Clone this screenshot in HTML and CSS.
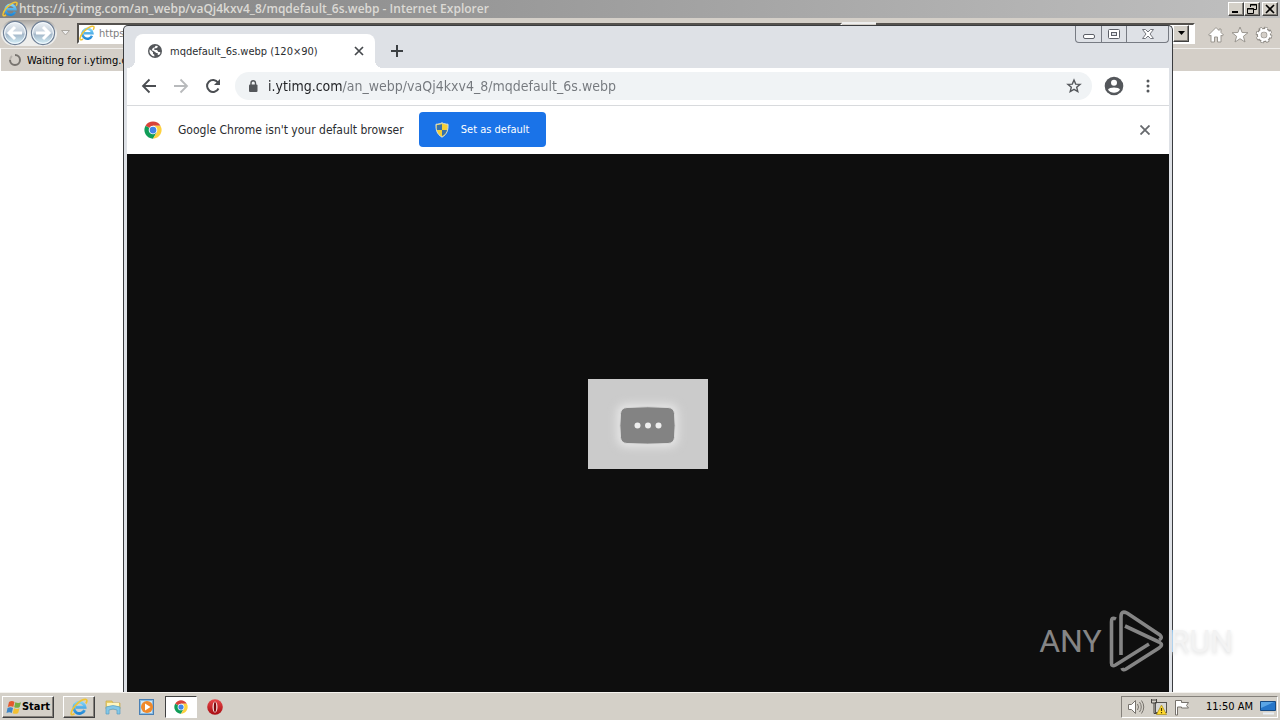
FILE: index.html
```html
<!DOCTYPE html>
<html lang="en">
<head>
<meta charset="utf-8">
<meta name="viewport" content="width=device-width, initial-scale=1">
<title>mqdefault_6s.webp (120×90)</title>
<link rel="stylesheet" href="styles.css">
</head>
<body>
<svg class="defs" aria-hidden="true">
  <defs>
    <linearGradient id="ie-blue" x1="0" y1="0" x2="0" y2="1"><stop offset="0" stop-color="#7fd3f8"/><stop offset="1" stop-color="#2188d6"/></linearGradient>
    <linearGradient id="orb" x1="0" y1="0" x2="0" y2="1"><stop offset="0" stop-color="#eef2f6"/><stop offset=".5" stop-color="#c3cfdb"/><stop offset=".55" stop-color="#a3b6c8"/><stop offset="1" stop-color="#d8f3fb"/></linearGradient>
    <linearGradient id="red-orb" x1="0" y1="0" x2="0" y2="1"><stop offset="0" stop-color="#e8484a"/><stop offset="1" stop-color="#a80c12"/></linearGradient>
    <symbol id="ie" viewBox="0 0 16 16">
      <path d="M13 10.800a5 5 0 1 1 .4-2.600H5" fill="none" stroke="url(#ie-blue)" stroke-width="2.500"/>
      <path d="M4 13.800C1.800 15.600.5 15 1.200 12.600 2 9.400 6 4.500 10 2.300 12.800.8 15.200.7 15 2.600c-.1 1-.5 1.700-.9 2.300" fill="none" stroke="#f0c436" stroke-width="1.500"/>
    </symbol>
    <symbol id="chrome" viewBox="0 0 48 48">
      <circle cx="24" cy="24" r="23" fill="#fff"/>
      <path d="M24 24 4.100 12.500A23 23 0 0 1 43.900 12.500H24z" fill="#d9433a"/>
      <path d="M24 24 4.100 12.500A23 23 0 0 0 24 47l10-17.300z" fill="#109d58"/>
      <path d="M24 12.500H43.900A23 23 0 0 1 24 47L34 29.700z" fill="#fdd13f"/>
      <circle cx="24" cy="24" r="11.500" fill="#fff"/><circle cx="24" cy="24" r="9" fill="#4285e8"/>
    </symbol>
  </defs>
</svg>
<div class="desktop">
  <section class="ie" aria-label="Internet Explorer">
    <header class="ie-title">
      <svg class="i16" aria-hidden="true"><use href="#ie"/></svg>
      <span class="ie-caption">https://i.ytimg.com/an_webp/vaQj4kxv4_8/mqdefault_6s.webp - Internet Explorer</span>
      <div class="ie-controls">
        <button class="raised" aria-label="Minimize"><svg viewBox="0 0 12 10"><path d="M2 8h6" stroke="#000" stroke-width="2"/></svg></button>
        <button class="raised" aria-label="Restore"><svg viewBox="0 0 12 10"><path d="M4.500 3V.5h6v5H8M4 1h7M1.500 4.500h6v5h-6zM1 5h7" fill="none" stroke="#000"/></svg></button>
        <button class="raised close" aria-label="Close"><svg viewBox="0 0 12 10"><path d="m2 1 8 8m0-8-8 8" stroke="#000" stroke-width="1.600"/></svg></button>
      </div>
    </header>
    <div class="ie-bar">
      <div class="ie-nav">
        <button aria-label="Back"><svg viewBox="0 0 26 26"><circle cx="13" cy="13" r="11.500" fill="url(#orb)" stroke="#718197" stroke-width="1.300"/><circle cx="13" cy="13" r="10.400" fill="none" stroke="#f6fbff"/><path d="M20 13H8m5-6-6 6 6 6" fill="none" stroke="#fff" stroke-width="3"/></svg></button>
        <button aria-label="Forward"><svg viewBox="0 0 26 26"><circle cx="13" cy="13" r="11.500" fill="url(#orb)" stroke="#718197" stroke-width="1.300"/><circle cx="13" cy="13" r="10.400" fill="none" stroke="#f6fbff"/><path d="M6 13h12m-5-6 6 6-6 6" fill="none" stroke="#fff" stroke-width="3"/></svg></button>
      </div>
      <button class="recent" aria-label="Recent pages"><svg viewBox="0 0 9 6"><path d="M.5.5h8l-4 4.500z" fill="#eee" stroke="#aaa69f"/></svg></button>
      <div class="sunken address">
        <svg class="i16" aria-hidden="true"><use href="#ie"/></svg>
        <input aria-label="Address" value="https://i.ytimg.com/an_webp/vaQj4kxv4_8/mqdefault_6s.webp">
      </div>
      <div class="ie-tab"></div>
      <div class="sunken search">
        <input aria-label="Search">
        <button class="raised drop" aria-label="Search options"><svg viewBox="0 0 9 5"><path d="M1 0h7L4.500 4z"/></svg></button>
      </div>
      <div class="ie-tools">
        <button aria-label="Home"><svg viewBox="0 0 18 18"><path d="M9 1.500 1.500 9 3 10l1-.8V16h3.500v-5h3v5H14V9.200l1 .8 1.500-1L14 6.500V3h-2v1.500z" fill="#fff" stroke="#9a968f"/></svg></button>
        <button aria-label="Favorites"><svg viewBox="0 0 18 18"><path d="m9 1 2.100 5.500 5.900.2-4.600 3.600L14 16l-5-3.300L4 16l1.600-5.700L1 6.700l5.900-.2z" fill="#fff" stroke="#9a968f"/></svg></button>
        <button aria-label="Tools"><svg viewBox="0 0 18 18"><circle cx="9" cy="9" r="6.800" fill="none" stroke="#8d8983" stroke-width="3" stroke-dasharray="3.200 2.140"/><circle cx="9" cy="9" r="5" fill="none" stroke="#8d8983" stroke-width="4.600"/><circle cx="9" cy="9" r="6.300" fill="none" stroke="#fff" stroke-width="2.400" stroke-dasharray="2 2.950" stroke-dashoffset="-.4"/><circle cx="9" cy="9" r="4.700" fill="none" stroke="#fff" stroke-width="2.800"/></svg></button>
      </div>
    </div>
    <div class="ie-status">
      <svg viewBox="0 0 14 14" aria-hidden="true"><path d="M7 2a5 5 0 1 1-5 5" fill="none" stroke="#77736e" stroke-width="2"/><path d="M2 7a5 5 0 0 1 2-4" fill="none" stroke="#b5b0aa" stroke-width="2"/></svg>
      <span>Waiting for i.ytimg.com</span>
    </div>
    <div class="ie-page"></div>
  </section>

  <section class="chrome" aria-label="Google Chrome">
    <header class="strip">
      <div class="tab">
        <svg class="i16" viewBox="0 0 24 24" aria-hidden="true"><circle cx="12" cy="12" r="10.500" fill="#54575b"/><path d="M4 9.500 9 14v2l2 1.500v2.700A8.500 8.500 0 0 1 4 9.500zM13 4l3 .5v2L14 8h-3v2.500h4l2 3h2l1.300 1A8.500 8.500 0 0 1 18 18l-2-.5V15h-2l-4-3-3-1 2-4h2z" fill="#fff"/></svg>
        <span class="tab-name">mqdefault_6s.webp (120×90)</span>
        <button class="tab-close" aria-label="Close tab"><svg viewBox="0 0 10 10"><path d="m1 1 8 8m0-8-8 8" stroke="#45484c" stroke-width="1.700"/></svg></button>
      </div>
      <button class="new-tab" aria-label="New tab"><svg viewBox="0 0 12 12"><path d="M6 0v12M0 6h12" stroke="#3c4043" stroke-width="2"/></svg></button>
      <div class="win-controls">
        <button aria-label="Minimize"><svg viewBox="0 0 14 12"><rect x="1.500" y="6.500" width="11" height="4" rx="1.500" fill="#fff" stroke="#5d6068"/></svg></button>
        <button aria-label="Maximize"><svg viewBox="0 0 14 12"><rect x="1.500" y="1.500" width="11" height="9" rx="1" fill="#fff" stroke="#5d6068"/><rect x="4.500" y="4.500" width="5" height="3" fill="#dee1e6" stroke="#5d6068"/></svg></button>
        <button class="wide" aria-label="Close"><svg viewBox="0 0 14 12"><path d="M1.500 1.500h3L7 4l2.500-2.500h3L9 6l3.500 4.500h-3L7 8l-2.500 2.500h-3L5 6z" fill="#fff" stroke="#74777e"/></svg></button>
      </div>
    </header>
    <div class="toolbar">
      <button aria-label="Back"><svg viewBox="0 0 16 16"><path d="M15 8H2m6.500-6.500L2 8l6.500 6.500" fill="none" stroke="#4b4e52" stroke-width="1.800"/></svg></button>
      <button aria-label="Forward"><svg viewBox="0 0 16 16"><path d="M1 8h13M7.500 1.500 14 8l-6.500 6.500" fill="none" stroke="#b8babc" stroke-width="1.800"/></svg></button>
      <button aria-label="Reload"><svg viewBox="0 0 16 16"><path d="M13.500 10.500A6 6 0 1 1 13 4.500" fill="none" stroke="#4b4e52" stroke-width="2"/><path d="M15 1v6H9z" fill="#4b4e52"/></svg></button>
      <div class="omnibox">
        <svg class="lock" viewBox="0 0 10 12" aria-hidden="true"><rect x="1" y="4.500" width="8.500" height="7.500" rx="1" fill="#54575b"/><path d="M3 5V3a2.200 2.200 0 0 1 4.500 0v2" fill="none" stroke="#54575b" stroke-width="1.400"/></svg>
        <input class="url" aria-label="Address and search bar" value="i.ytimg.com/an_webp/vaQj4kxv4_8/mqdefault_6s.webp">
        <button aria-label="Bookmark this page"><svg viewBox="0 0 16 16"><path d="m8 2 1.700 4.100 4.400.3-3.400 2.900 1.100 4.300L8 11.300l-3.800 2.300 1.100-4.300-3.400-2.900 4.400-.3z" fill="none" stroke="#54575b" stroke-width="1.400"/></svg></button>
      </div>
      <button class="profile" aria-label="Profile"><svg viewBox="0 0 20 20"><circle cx="10" cy="10" r="9.300" fill="#54575b"/><circle cx="10" cy="6.700" r="3" fill="#fff"/><path d="M4 13.800c1-3.200 11-3.200 12 0-2.600 3.800-9.400 3.800-12 0z" fill="#fff"/></svg></button>
      <button aria-label="Menu"><svg viewBox="0 0 16 16"><g fill="#54575b"><circle cx="8" cy="3" r="1.500"/><circle cx="8" cy="8" r="1.500"/><circle cx="8" cy="13" r="1.500"/></g></svg></button>
    </div>
    <div class="infobar">
      <svg class="logo" aria-hidden="true"><use href="#chrome"/></svg>
      <span class="message">Google Chrome isn't your default browser</span>
      <button class="default-btn">
        <svg viewBox="0 0 14 16" aria-hidden="true"><path d="M7 .8c2 1 4 1.400 6 1.400.3 6-1 10-6 13C2 12.200.7 8.200 1 2.200 3 2.200 5 1.800 7 .8z" fill="#f4cf38" stroke="#d5e0dc"/><path d="M7 2v6H2C1.700 6 1.800 4.500 1.900 3 4 3 5.500 2.700 7 2zM7 8h5c-.7 3-2.300 4.800-5 6z" fill="#3972a9"/></svg>
        <span>Set as default</span>
      </button>
      <button class="dismiss" aria-label="Dismiss"><svg viewBox="0 0 10 10"><path d="m.5.5 9 9m0-9-9 9" stroke="#66696d" stroke-width="1.800"/></svg></button>
    </div>
    <main class="viewer">
      <svg class="thumb" viewBox="0 0 120 90" role="img" aria-label="Video thumbnail placeholder">
        <defs><filter id="glow" x="-50%" y="-50%" width="200%" height="200%"><feGaussianBlur stdDeviation="4"/></filter></defs>
        <rect width="120" height="90" fill="#cbcbcb"/>
        <rect x="29" y="25" width="61" height="43" rx="9" fill="#e6e6e6" filter="url(#glow)"/>
        <path d="M39 28.500q21-1.500 41 0 6 .5 6.500 6 1.200 12 0 24-.5 5.500-6.500 6-20 1.200-41 0-6-.5-6.500-6-1.200-12 0-24 .5-5.500 6.500-6z" fill="#838383" stroke="#d9d9d9"/>
        <g fill="#eee"><circle cx="49.500" cy="46.500" r="3"/><circle cx="60" cy="46.500" r="3"/><circle cx="70.500" cy="46.500" r="3"/></g>
      </svg>
    </main>
  </section>

  <div class="watermark">
    <span class="any">ANY</span>
    <svg viewBox="0 0 56 64" aria-hidden="true"><g fill="none" stroke="#858585" stroke-width="3.600" stroke-linejoin="round"><path d="M8 10C4 8 3.500 10 3.500 13v41q0 4 4 2L41 35"/><path d="M13 46V8q0-7 6-4l33 22q3 3-1 5"/><path d="m17 17 34 16q5 3 0 6L18 60q-3 2-4-1"/></g></svg>
    <span class="run">RUN</span>
  </div>

  <footer class="taskbar">
    <button class="raised start">
      <svg viewBox="0 0 16 16" aria-hidden="true"><path d="M3 3q3-2 5.500 0L7.300 8Q5 6.500 1.800 8z" fill="#e4592d"/><path d="M9.300 3.300q3 1.600 5.700 0L13.700 8q-2.500 1.600-5.500.2z" fill="#75ad42"/><path d="M1.500 9Q4.500 7.500 7 9l-1.200 5Q3.500 12.500.5 14z" fill="#3e86c6"/><path d="M8 9.300q3 1.500 5.500 0L12.200 14q-2.500 1.600-5.500.2z" fill="#f2c032"/></svg>
      <span>Start</span>
    </button>
    <div class="tasks">
      <button class="raised" aria-label="Internet Explorer"><svg><use href="#ie"/></svg></button>
      <button aria-label="File Explorer"><svg viewBox="0 0 18 18"><path d="M2 3h6l1 2h7v6H2z" fill="#e9cf6b" stroke="#c7a94b" stroke-width=".7"/><path d="M3 5h12v3H3z" fill="#fff5bd"/><path d="M2 16V9q7-3 14 0v7h-3v-4q-4-2-8 0v4z" fill="#83c8e8" stroke="#5a9ec2" stroke-width=".7"/></svg></button>
      <button aria-label="Media Player"><svg viewBox="0 0 18 18"><rect x="1.500" y="1.500" width="14" height="15" fill="#8abce2" stroke="#4a80b4"/><rect x="3" y="3" width="11" height="12" fill="#d1e8f6"/><circle cx="9" cy="9" r="6" fill="#f0892a"/><path d="m7 5.500 5.500 3.500L7 12.500z" fill="#fff"/></svg></button>
      <button class="pressed" aria-label="Chrome"><svg class="small"><use href="#chrome"/></svg></button>
      <button aria-label="Opera"><svg viewBox="0 0 18 18"><circle cx="9" cy="9" r="7.800" fill="url(#red-orb)"/><ellipse cx="9" cy="9" rx="2.500" ry="5.500" fill="#f6dede"/><ellipse cx="9" cy="9" rx="1.200" ry="5" fill="#7c080c"/></svg></button>
    </div>
    <div class="tray">
      <button aria-label="Volume"><svg viewBox="0 0 18 18"><path d="M1.500 6.500h3l4-4v13l-4-4h-3z" fill="#fff" stroke="#77736d"/><path d="M10.500 6q2 3 0 6M12.500 4q3.500 5 0 10M14.500 2.500q4.500 6.500 0 13" fill="none" stroke="#77736d"/></svg></button>
      <button aria-label="Network"><svg viewBox="0 0 18 18"><rect x="5.500" y="4.500" width="11" height="10" fill="#d7d7d4" stroke="#55534f"/><path d="M1.500 1v4h5V1M4 5v10.500h4M3 1v2M5 1v2" fill="none" stroke="#44423f"/><path d="m11.500 7 5 9.500h-10z" fill="#ffd92e" stroke="#a88d16" stroke-width=".7"/><path d="M11.500 10v3m0 1v1.300" stroke="#4a3a00" stroke-width="1.200"/></svg></button>
      <button aria-label="Action Center"><svg viewBox="0 0 18 18"><path d="M2.500 17V2.500h6v2h7l-2 3 2 2.500h-7V9h-4v8z" fill="#fff" stroke="#77736d"/></svg></button>
      <time>11:50 AM</time>
      <button aria-label="Show desktop"><svg viewBox="0 0 18 18"><path d="M1.500 3.500h15v9h-15z" fill="#2676c9" stroke="#174a82"/><path d="M2 4h13L2 10z" fill="#5aa5e6"/><path d="M4 15.500h11" stroke="#e9eff5" stroke-width="2"/></svg></button>
    </div>
  </footer>
</div>
</body>
</html>
```
FILE: styles.css
```css
* { box-sizing: border-box; }

body {
  margin: 0;
  font-family: "DejaVu Sans Condensed", "DejaVu Sans", sans-serif;
  font-size: 11px;
  color: #000;
}

button, input { font: inherit; color: inherit; border: 0; padding: 0; background: none; }
button { display: flex; align-items: center; justify-content: center; }
input { min-width: 0; outline: 0; }
svg { display: block; flex: none; }

.defs { position: absolute; width: 0; height: 0; }
.i16 { width: 16px; height: 16px; }

.desktop {
  position: relative;
  display: flex;
  flex-direction: column;
  min-height: 100vh;
  overflow: hidden;
}

.raised {
  background: #d4d0c8;
  border: 1px solid;
  border-color: #fff #404040 #404040 #fff;
  box-shadow: inset -1px -1px #85817b;
}

/* Internet Explorer */
.ie { flex: 1; display: flex; flex-direction: column; background: #fff; }
.ie-title {
  display: flex;
  align-items: center;
  gap: 1px;
  height: 18px;
  padding: 0 2px;
  background: linear-gradient(90deg, #808080, #c0c0c0);
}
.ie-caption {
  flex: 1;
  color: #dcdad5;
  font-family: "Open Sans", "Noto Sans", sans-serif;
  font-size: 12px;
  font-weight: 600;
  line-height: 18px;
  white-space: nowrap;
}
.ie-controls { display: flex; }
.ie-controls button { width: 16px; height: 14px; }
.ie-controls svg { width: 12px; height: 10px; }
.ie-controls .close { margin-left: 2px; }

.ie-bar { display: flex; align-items: center; height: 30px; background: #d4cfc8; }
.ie-nav {
  display: flex;
  gap: 2px;
  margin-left: 1px;
  padding: 0 1px;
  border-radius: 14px;
  background: linear-gradient(#aaa6a1, #eeeeec 50%);
}
.ie-nav svg { width: 26px; height: 26px; }
.recent { margin: 0 7px 0 4px; }
.recent svg { width: 9px; height: 6px; }
.sunken {
  display: flex;
  align-items: center;
  height: 21px;
  background: #fff;
  border: 2px solid;
  border-color: #55524e #fff #fff #55524e;
}
.address { flex: 71; gap: 4px; color: #7d7d7d; }
.address input { flex: 1; }
.ie-tab { width: 34px; height: 22px; border-top: 2px solid #eee; }
.search { flex: 29; padding-right: 4px; }
.search input { flex: 1; }
.drop { width: 16px; height: 17px; }
.drop svg { width: 9px; height: 5px; }
.ie-tools { display: flex; gap: 6px; padding: 4px 7px 0 12px; }
.ie-tools svg { width: 18px; height: 18px; }

.ie-status {
  display: flex;
  align-items: center;
  gap: 5px;
  height: 23px;
  padding-left: 7px;
  background: #d4cfc8;
  border-top: 1px solid #efedea;
  border-left: 1px solid #fff;
}
.ie-status svg { width: 14px; height: 14px; }
.ie-page { flex: 1; }

/* Chrome window */
.chrome {
  position: absolute;
  top: 25px;
  right: 107px;
  bottom: 28px;
  left: 123px;
  display: flex;
  flex-direction: column;
  padding: 0 3px;
  background: #dee1e6;
  border: 1px solid #3a3c3f;
  border-bottom: 0;
  border-radius: 5px 5px 0 0;
  color: #2b2d30;
}
.strip { display: flex; align-items: flex-end; height: 42px; padding-left: 8px; }
.tab {
  position: relative;
  display: flex;
  align-items: center;
  gap: 7px;
  width: 240px;
  height: 34px;
  padding: 0 10px 0 12px;
  background: #fff;
  border-radius: 8px 8px 0 0;
}
.tab::before, .tab::after {
  content: "";
  position: absolute;
  bottom: 0;
  width: 8px;
  height: 8px;
}
.tab::before { left: -8px; background: radial-gradient(circle at 0 0, transparent 8px, #fff 8px); }
.tab::after { right: -8px; background: radial-gradient(circle at 100% 0, transparent 8px, #fff 8px); }
.tab-name { flex: 1; white-space: nowrap; }
.tab-close svg { width: 10px; height: 10px; margin-right: 1px; }
.new-tab { width: 28px; height: 34px; margin-left: 8px; }
.new-tab svg { width: 12px; height: 12px; }
.win-controls {
  display: flex;
  align-self: flex-start;
  height: 17px;
  margin-left: auto;
  border: 1px solid #777b83;
  border-top: 0;
  border-radius: 0 0 4px 4px;
}
.win-controls button { width: 25px; }
.win-controls button + button { border-left: 1px solid #777b83; }
.win-controls .wide { width: 42px; }
.win-controls svg { width: 14px; height: 12px; }

.toolbar {
  display: flex;
  align-items: center;
  gap: 16px;
  height: 38px;
  padding: 0 13px 1px 14px;
  background: #fff;
  border-bottom: 1px solid #d8dadd;
}
.toolbar svg { width: 16px; height: 16px; }
.omnibox {
  flex: 1;
  display: flex;
  align-items: center;
  gap: 10px;
  height: 28px;
  margin: 0 -4px 0 -2px;
  padding: 0 10px 0 13px;
  background: #f0f3f5;
  border-radius: 14px;
}
.omnibox .lock { width: 10px; height: 12px; }
.url {
  flex: 1;
  font-size: 14px;
  color: transparent;
  background: linear-gradient(90deg, #202124 74px, #74787d 74px);
  -webkit-background-clip: text;
  background-clip: text;
}
.toolbar .profile svg { width: 20px; height: 20px; }

.infobar {
  display: flex;
  align-items: center;
  height: 48px;
  padding: 0 19px 1px 17px;
  background: #fff;
}
.logo { width: 18px; height: 18px; }
.message { margin: 0 15px 0 16px; font-size: 12px; white-space: nowrap; }
.default-btn {
  gap: 12px;
  width: 127px;
  height: 35px;
  background: #1a73e8;
  border-radius: 4px;
  color: #fff;
}
.default-btn svg { width: 14px; height: 16px; }
.dismiss { margin-left: auto; }
.dismiss svg { width: 10px; height: 10px; }

.viewer {
  flex: 1;
  display: flex;
  align-items: center;
  justify-content: center;
  padding-top: 2px;
  background: #0e0e0e;
}
.thumb { width: 120px; height: 90px; }

/* Watermark over the desktop */
.watermark {
  position: absolute;
  right: 47px;
  bottom: 47px;
  display: flex;
  align-items: center;
  gap: 6px;
  font-family: "Liberation Sans Narrow", Roboto, sans-serif;
  font-size: 32px;
  line-height: 64px;
}
.watermark svg { width: 56px; height: 64px; }
.any { color: #858585; }
.run { color: #f3f3f3; text-shadow: 0 2px 4px #ddd; }

/* Taskbar */
.taskbar {
  display: flex;
  align-items: center;
  height: 28px;
  padding: 2px;
  background: #d4d0c8;
  border-top: 1px solid #f4f2ee;
}
.start { width: 52px; height: 22px; font-weight: bold; }
.start svg { width: 16px; height: 16px; }
.tasks { display: flex; gap: 2px; margin-left: 9px; }
.tasks button { width: 32px; height: 22px; }
.tasks svg { width: 18px; height: 18px; }
.tasks .small { width: 14px; height: 14px; }
.tasks .pressed {
  background: #fff;
  border: 1px solid;
  border-color: #404040 #fff #fff #404040;
}
.tray {
  display: flex;
  align-items: center;
  gap: 5px;
  height: 22px;
  margin-left: auto;
  padding: 0 0 0 5px;
  border: 1px solid;
  border-color: #85817b #fff #fff #85817b;
}
.tray svg { width: 18px; height: 18px; }
.tray time { margin: 0 1px 0 10px; white-space: nowrap; }
```
